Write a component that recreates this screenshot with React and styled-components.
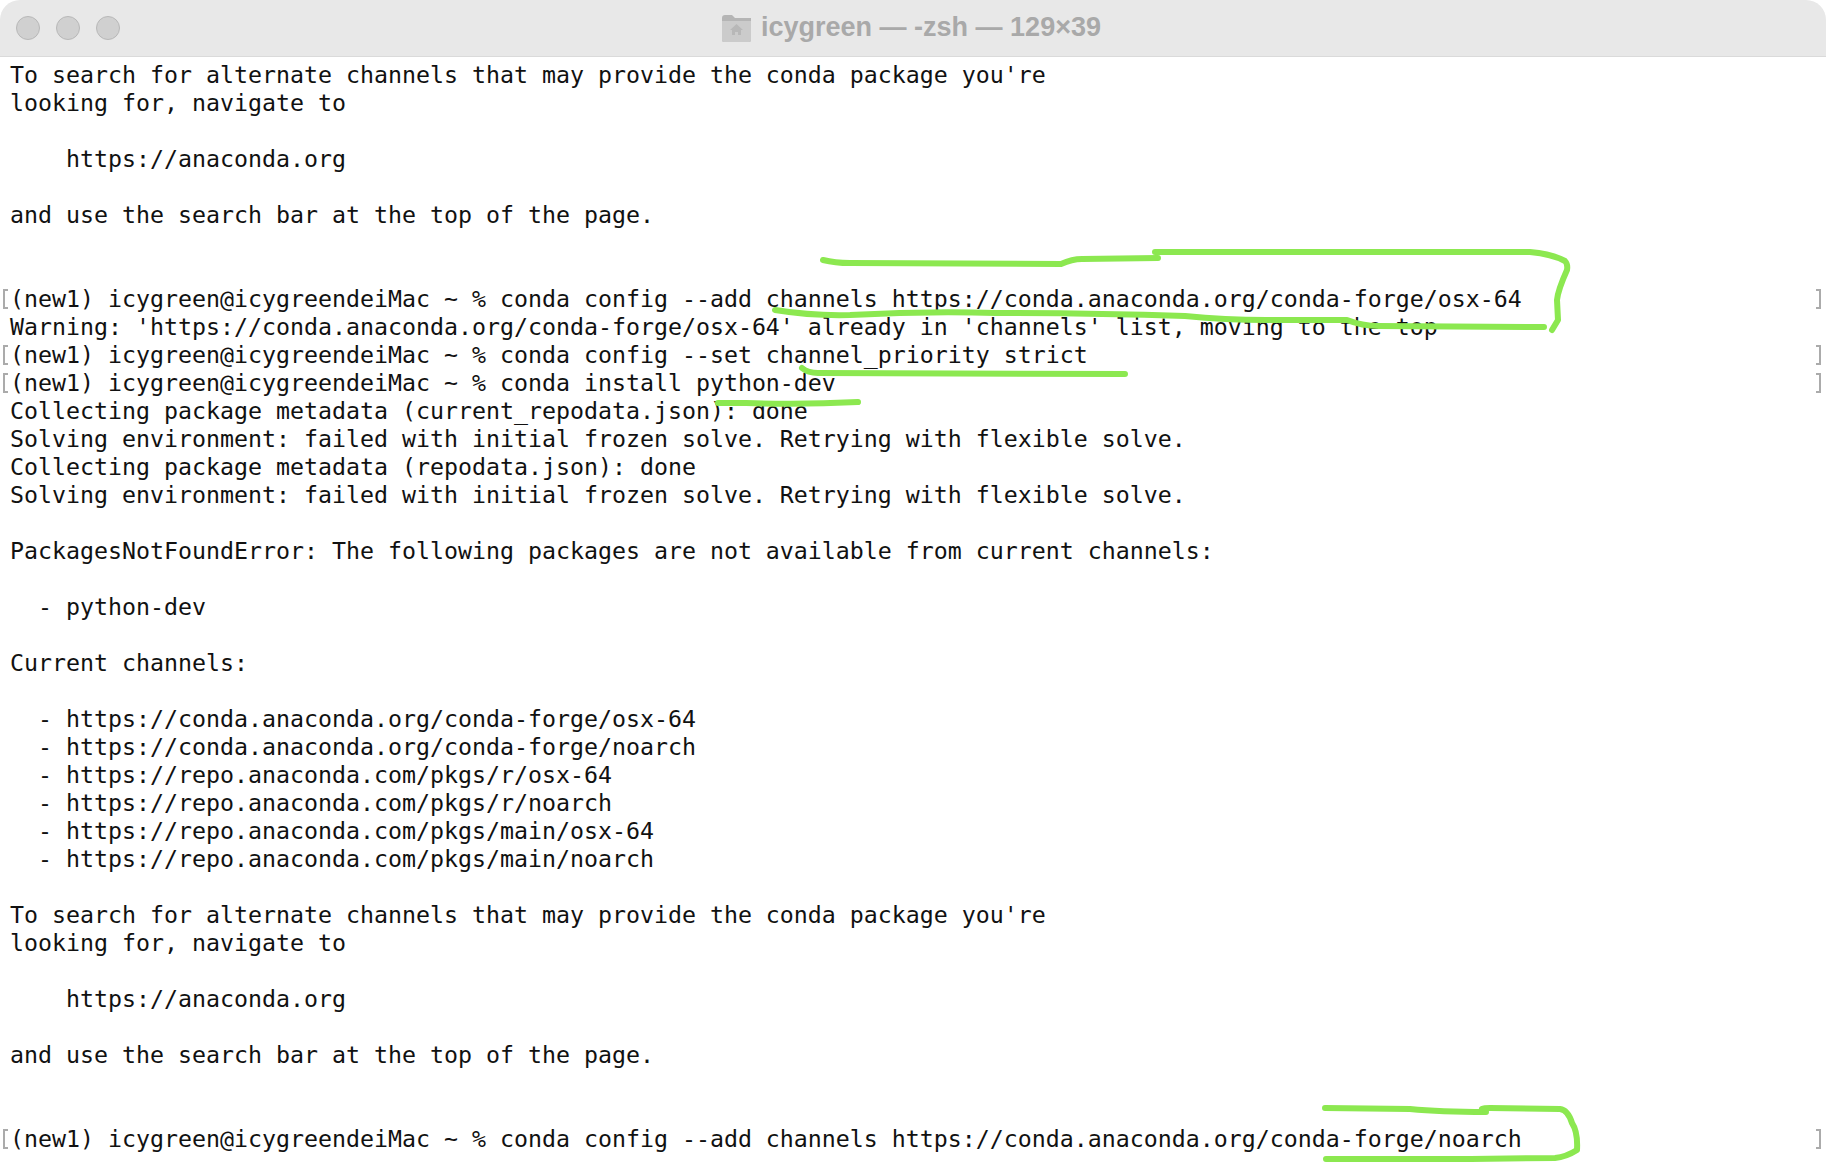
import React from 'react';
import styled, { createGlobalStyle } from 'styled-components';

const GlobalStyle = createGlobalStyle`
  html, body {
    margin: 0;
    padding: 0;
    background: #fff;
  }
`;

const Window = styled.div`
  position: relative;
  width: 1826px;
  height: 1162px;
  overflow: hidden;
  background: #fff;
`;

const TitleBar = styled.div`
  position: relative;
  display: flex;
  align-items: center;
  justify-content: center;
  gap: 10px;
  height: 56px;
  padding-right: 3px;
  background: #e8e8e8;
  border-bottom: 1px solid #dadada;
  border-radius: 20px 20px 0 0;
`;

const Lights = styled.div`
  position: absolute;
  left: 16px;
  top: 16px;
  display: flex;
  gap: 16px;
`;

const Light = styled.span`
  width: 24px;
  height: 24px;
  box-sizing: border-box;
  border-radius: 50%;
  background: #d0d0d0;
  border: 1px solid #b8b8b8;
`;

const Title = styled.div`
  margin-bottom: 2px;
  font-family: "Liberation Sans", Arial, sans-serif;
  font-weight: 700;
  font-size: 27px;
  color: #a9a9a9;
  white-space: pre;
`;

const Screen = styled.div`
  padding-top: 4px;
`;

const Row = styled.div`
  display: grid;
  grid-template-columns: 10px 1fr 10px;
  align-items: center;
  height: 28px;
`;

const Text = styled.span`
  font-family: "DejaVu Sans Mono", "Liberation Mono", monospace;
  font-size: 23.25px;
  line-height: 28px;
  color: #111;
  white-space: pre;
`;

const Mark = styled.span`
  justify-self: ${(p) => (p.$right ? 'start' : 'end')};
  width: 5px;
  height: 20px;
  margin-right: ${(p) => (p.$right ? '0' : '2px')};
  box-sizing: border-box;
  border: 2px solid #ababab;
  border-left: ${(p) => (p.$right ? 'none' : '2px solid #ababab')};
  border-right: ${(p) => (p.$right ? '2px solid #ababab' : 'none')};
`;

const Scribble = styled.svg`
  position: absolute;
  left: 0;
  top: 0;
  pointer-events: none;
`;

const Ink = styled.path`
  fill: none;
  stroke: #8ce850;
  stroke-width: 6;
  stroke-linecap: round;
  stroke-linejoin: round;
`;

const PROMPT = '(new1) icygreen@icygreendeiMac ~ % ';

const searchHint = [
  "To search for alternate channels that may provide the conda package you're",
  'looking for, navigate to',
  '',
  '    https://anaconda.org',
  '',
  'and use the search bar at the top of the page.',
  '',
  '',
];

const lines = [
  ...searchHint,
  { prompt: true, text: PROMPT + 'conda config --add channels https://conda.anaconda.org/conda-forge/osx-64' },
  "Warning: 'https://conda.anaconda.org/conda-forge/osx-64' already in 'channels' list, moving to the top",
  { prompt: true, text: PROMPT + 'conda config --set channel_priority strict' },
  { prompt: true, text: PROMPT + 'conda install python-dev' },
  'Collecting package metadata (current_repodata.json): done',
  'Solving environment: failed with initial frozen solve. Retrying with flexible solve.',
  'Collecting package metadata (repodata.json): done',
  'Solving environment: failed with initial frozen solve. Retrying with flexible solve.',
  '',
  'PackagesNotFoundError: The following packages are not available from current channels:',
  '',
  '  - python-dev',
  '',
  'Current channels:',
  '',
  '  - https://conda.anaconda.org/conda-forge/osx-64',
  '  - https://conda.anaconda.org/conda-forge/noarch',
  '  - https://repo.anaconda.com/pkgs/r/osx-64',
  '  - https://repo.anaconda.com/pkgs/r/noarch',
  '  - https://repo.anaconda.com/pkgs/main/osx-64',
  '  - https://repo.anaconda.com/pkgs/main/noarch',
  '',
  ...searchHint,
  { prompt: true, text: PROMPT + 'conda config --add channels https://conda.anaconda.org/conda-forge/noarch' },
];

const strokes = [
  'M823 260 Q835 263 850 263 L1061 264 Q1072 259 1082 259 L1158 258',
  'M1155 252 L1530 252 Q1552 254 1565 261 Q1568 264 1567 270 Q1558 290 1557 300 L1558 320 L1552 330',
  'M775 310 Q812 316 850 315 Q925 311 996 313 Q1095 313 1185 316 Q1225 320 1266 320 L1347 320 Q1362 326 1379 326 L1544 327',
  'M802 368 Q808 373 818 373 L1125 374',
  'M718 403 L746 403 Q800 405 858 402',
  'M1325 1108 L1410 1109 Q1440 1112 1486 1112',
  'M1482 1109 Q1484 1108 1490 1108 L1560 1109 Q1568 1110 1572 1123 Q1578 1132 1577 1150 Q1566 1157 1555 1158 L1471 1159 L1326 1159',
];

const FolderIcon = () => (
  <svg width="29" height="27" viewBox="0 0 29 27">
    <path d="M0 3 Q0 0 3 0 H10 L13 3 H29 V25 Q29 27 27 27 H2 Q0 27 0 25 Z" fill="#b5b5b5" />
    <path d="M0 6 H29 V25 Q29 27 27 27 H2 Q0 27 0 25 Z" fill="#cbcbcb" />
    <path d="M14.5 9 L21 15 H19 V20 H16 V17 H13 V20 H10 V15 H8 Z" fill="#b8b8b8" />
  </svg>
);

const App = () => (
  <Window>
    <GlobalStyle />
    <TitleBar>
      <Lights>
        <Light />
        <Light />
        <Light />
      </Lights>
      <FolderIcon />
      <Title>icygreen — -zsh — 129×39</Title>
    </TitleBar>
    <Screen>
      {lines.map((line, i) => {
        const prompt = typeof line === 'object';
        return (
          <Row key={i}>
            {prompt ? <Mark /> : <span />}
            <Text>{prompt ? line.text : line}</Text>
            {prompt ? <Mark $right /> : <span />}
          </Row>
        );
      })}
    </Screen>
    <Scribble width="1826" height="1162" viewBox="0 0 1826 1162">
      {strokes.map((d) => (
        <Ink key={d} d={d} />
      ))}
    </Scribble>
  </Window>
);

export default App;
